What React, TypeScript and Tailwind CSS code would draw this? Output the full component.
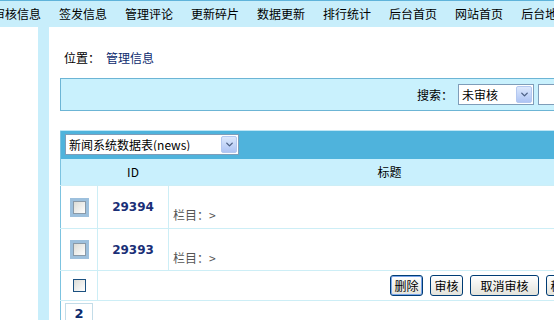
import { ChevronDown } from "lucide-react";

const navItems = ["审核信息", "签发信息", "管理评论", "更新碎片", "数据更新", "排行统计", "后台首页", "网站首页", "后台地图"];

const cjk = { fontFamily: '"Noto Sans CJK SC", "Liberation Sans", sans-serif' };

function XpSelect({ label, w }: { label: string; w: string }) {
  return (
    <div className={`flex h-[21px] items-center border border-[#7f9db9] bg-white ${w}`}>
      <span className="flex-1 truncate pl-[3px] text-[12px] leading-none text-black">{label}</span>
      <span className="mr-px flex h-[17px] w-[16px] items-center justify-center rounded-[2px] border border-[#b4c8f0] bg-gradient-to-b from-[#dce8fc] to-[#aec4f4]">
        <ChevronDown size={11} strokeWidth={3} className="text-[#4d6185]" />
      </span>
    </div>
  );
}

function RowCheck() {
  return (
    <div className="mx-auto flex h-[19px] w-[19px] items-center justify-center bg-[#9dc0dd]">
      <div className="h-[13px] w-[13px] border border-[#8a9aa8] bg-gradient-to-br from-[#dcdcd6] to-white" />
    </div>
  );
}

function Btn({ label, focus, w }: { label: string; focus?: boolean; w: string }) {
  return (
    <button
      className={`h-[21px] shrink-0 rounded-[3px] border border-[#003c74] bg-gradient-to-b from-white to-[#e3e3db] text-[12px] leading-none text-black ${w} ${
        focus ? "shadow-[inset_0_0_0_1px_#7aa5ea]" : ""
      }`}
    >
      {label}
    </button>
  );
}

export default function App() {
  const rows = [{ id: "29394" }, { id: "29393" }];
  return (
    <div className="h-[320px] w-[554px] overflow-hidden bg-white text-[12px] text-black" style={cjk}>
      <div className="flex h-[27px] items-center gap-[18px] overflow-hidden whitespace-nowrap border-t border-[#5fb3da] bg-[#c8eefb]">
        {navItems.map((n) => (
          <span key={n} className="shrink-0 first:-ml-[7px]">
            {n}
          </span>
        ))}
      </div>
      <div className="flex h-[293px]">
        <div className="w-[38px] shrink-0" />
        <div className="w-[11px] shrink-0 bg-[#c8eefb]" />
        <div className="w-[690px] shrink-0 pl-[11px]">
          <div className="flex h-[51px] items-center pl-[4px] pt-[11px]">
            <span>位置：</span>
            <span className="ml-[6px] text-[#0c2b6e]">管理信息</span>
          </div>
          <div className="flex h-[33px] w-[680px] items-center border border-[#6cb5d5] bg-[#c9f1fd] pl-[356px]">
            <span>搜索：</span>
            <span className="ml-[5px]">
              <XpSelect label="未审核" w="w-[76px]" />
            </span>
            <span className="ml-[4px] h-[21px] w-[140px] border border-[#7f9db9] bg-white" />
          </div>
          <table className="mt-[19px] w-[680px] table-fixed border-collapse border border-[#7cc3e0]">
            <colgroup>
              <col className="w-[37px]" />
              <col className="w-[71px]" />
              <col className="w-[442px]" />
              <col />
            </colgroup>
            <tbody>
              <tr className="h-[28px] border-t border-[#bfe6f5] bg-[#4fb3dc]">
                <td colSpan={4} className="pl-[4px]">
                  <XpSelect label="新闻系统数据表(news)" w="w-[174px]" />
                </td>
              </tr>
              <tr className="h-[27px] bg-[#c9f0fd]">
                <td />
                <td className="text-center">ID</td>
                <td className="text-center">标题</td>
                <td />
              </tr>
              {rows.map((r, i) => (
                <tr key={r.id} className={`${i === 0 ? "h-[43px]" : "h-[42px]"} border-t border-[#cdeef6]`}>
                  <td className="border-r border-[#cdeef6] align-middle">
                    <RowCheck />
                  </td>
                  <td
                    className="border-r border-[#cdeef6] text-center text-[12px] font-bold text-[#1a2f77]"
                    style={{ fontFamily: '"DejaVu Sans", Verdana, sans-serif' }}
                  >
                    {r.id}
                  </td>
                  <td className="pl-[4px] align-middle">
                    <div className="h-[16px]" />
                    <div className="leading-[16px] text-[#555]">栏目：&gt;</div>
                  </td>
                  <td />
                </tr>
              ))}
              <tr className="h-[30px] border-y border-[#cdeef6]">
                <td className="border-r border-[#cdeef6]">
                  <div className="mx-auto h-[13px] w-[13px] border border-[#1c5180] bg-gradient-to-br from-[#dcdcd6] to-white" />
                </td>
                <td colSpan={3}>
                  <div className="flex gap-[7px] pl-[292px]">
                    <Btn label="删除" w="w-[33px]" focus />
                    <Btn label="审核" w="w-[33px]" />
                    <Btn label="取消审核" w="w-[69px]" />
                    <Btn label="移动" w="w-[33px]" />
                    <Btn label="推荐" w="w-[33px]" />
                  </div>
                </td>
              </tr>
              <tr>
                <td colSpan={4} className="pl-[4px] pt-[2px]">
                  <div
                    className="flex h-[22px] w-[28px] items-center justify-center border border-[#c3dce8] text-[13px] font-bold text-[#0c2b6e]"
                    style={{ fontFamily: '"DejaVu Sans", Verdana, sans-serif' }}
                  >
                    2
                  </div>
                </td>
              </tr>
            </tbody>
          </table>
        </div>
      </div>
    </div>
  );
}
